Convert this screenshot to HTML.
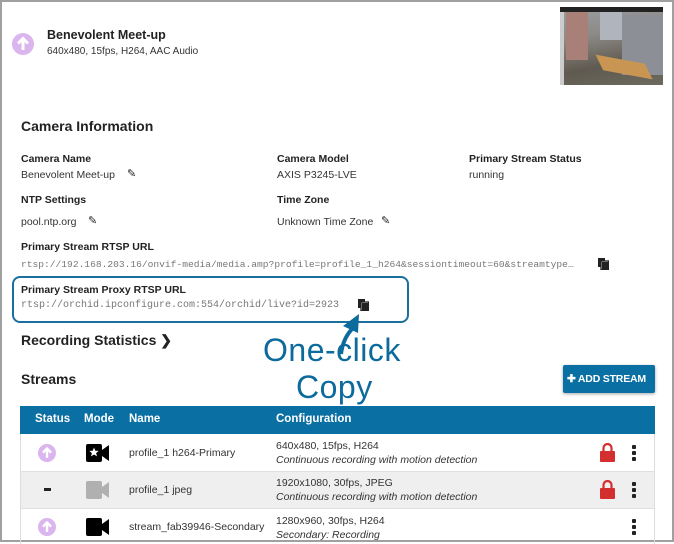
<!DOCTYPE html>
<html><head><meta charset="utf-8"><style>
*{margin:0;padding:0;box-sizing:border-box}
body{width:674px;height:544px;overflow:hidden;background:#fff;font-family:"Liberation Sans",sans-serif;color:#222;position:relative}
.frame{position:absolute;left:0;top:0;width:674px;height:542px;border:2px solid #a0a0a0}
.a{position:absolute;white-space:nowrap}
.lab{font-size:10.5px;font-weight:bold;color:#222}
.val{font-size:10.5px;color:#333}
.mono{font-family:"Liberation Mono",monospace;font-size:9.6px;color:#777}
.h{font-size:14px;font-weight:bold;color:#222}
.th{color:#fff;font-weight:bold;font-size:11.5px}
.cfg{font-size:10.5px;color:#333;line-height:14px}
.dots{position:absolute;width:4px;height:16px}
.dots b{display:block;width:4px;height:4px;background:#222;border-radius:1px;margin-bottom:2px}
</style></head><body>
<div class="frame"></div>
<svg class="a" style="left:12px;top:33px" width="22" height="22" viewBox="0 0 22 22"><circle cx="11" cy="11" r="11" fill="#dab5ee"/><path d="M11 17V6M6 10.5L11 5.5 16 10.5" stroke="#fff" stroke-width="3" fill="none"/></svg>
<div class="a" style="left:47px;top:28px;font-size:12.5px;font-weight:bold">Benevolent Meet-up</div>
<div class="a" style="left:47px;top:46px;font-size:10px;color:#333">640x480, 15fps, H264, AAC Audio</div>
<div class="a" style="left:560px;top:7px;width:103px;height:78px;background:linear-gradient(170deg,#9a9ea4 0%,#8c8a86 35%,#5f5a50 70%,#6d6a60 100%);overflow:hidden">
<div style="position:absolute;left:0;top:0;width:103px;height:5px;background:#222"></div>
<div style="position:absolute;left:6px;top:5px;width:22px;height:48px;background:#a98078"></div>
<div style="position:absolute;left:0;top:5px;width:4px;height:73px;background:#ccc"></div>
<div style="position:absolute;left:40px;top:5px;width:22px;height:28px;background:#b0b4bd"></div>
<div style="position:absolute;left:62px;top:8px;width:41px;height:60px;background:#8d8f96"></div>
<div style="position:absolute;left:42px;top:52px;width:44px;height:16px;background:#c89552;transform:skewX(35deg) rotate(12deg)"></div>
</div>
<div class="a h" style="left:21px;top:118px">Camera Information</div>
<div class="a lab" style="left:21px;top:153px">Camera Name</div>
<div class="a val" style="left:21px;top:169px">Benevolent Meet-up</div>
<div class="a" style="left:127px;top:167px;font-size:11px">✎</div>
<div class="a lab" style="left:277px;top:153px">Camera Model</div>
<div class="a val" style="left:277px;top:169px">AXIS P3245-LVE</div>
<div class="a lab" style="left:469px;top:153px">Primary Stream Status</div>
<div class="a val" style="left:469px;top:169px">running</div>
<div class="a lab" style="left:21px;top:194px">NTP Settings</div>
<div class="a val" style="left:21px;top:216px">pool.ntp.org</div>
<div class="a" style="left:88px;top:214px;font-size:11px">✎</div>
<div class="a lab" style="left:277px;top:194px">Time Zone</div>
<div class="a val" style="left:277px;top:216px">Unknown Time Zone</div>
<div class="a" style="left:381px;top:214px;font-size:11px">✎</div>
<div class="a lab" style="left:21px;top:241px">Primary Stream RTSP URL</div>
<div class="a mono" style="left:21px;top:259px;width:557px;overflow:hidden;text-overflow:ellipsis">rtsp://192.168.203.16/onvif-media/media.amp?profile=profile_1_h264&amp;sessiontimeout=60&amp;streamtype=unicast</div>
<svg class="a" style="left:598px;top:258px" width="11" height="12" viewBox="0 0 11 12"><rect x="0" y="0" width="7" height="9" fill="#222"/><rect x="3" y="3" width="7.5" height="8.5" fill="#fff" stroke="#222" stroke-width="1.3"/><rect x="4" y="4" width="6" height="7" fill="#222"/></svg>
<div class="a" style="left:12px;top:276px;width:397px;height:47px;border:2px solid #1a6f9e;border-radius:8px"></div>
<div class="a lab" style="left:21px;top:284px">Primary Stream Proxy RTSP URL</div>
<div class="a mono" style="left:21px;top:300px;font-size:10px">rtsp://orchid.ipconfigure.com:554/orchid/live?id=2923</div>
<svg class="a" style="left:358px;top:299px" width="11" height="12" viewBox="0 0 11 12"><rect x="0" y="0" width="7" height="9" fill="#222"/><rect x="3" y="3" width="7.5" height="8.5" fill="#fff" stroke="#222" stroke-width="1.3"/><rect x="4" y="4" width="6" height="7" fill="#222"/></svg>
<div class="a h" style="left:21px;top:332px">Recording Statistics ❯</div>
<svg class="a" style="left:325px;top:308px" width="45" height="50" viewBox="0 0 45 50"><path d="M16 46 Q18 30 28 20" stroke="#0d6a9c" stroke-width="4" fill="none"/><path d="M34 6 L18 18 L33 25 Z" fill="#0d6a9c"/></svg>
<div class="a" style="left:263px;top:332px;font-size:32px;color:#0d6a9c;letter-spacing:0.5px">One-click</div>
<div class="a" style="left:296px;top:369px;font-size:32px;color:#0d6a9c;letter-spacing:0.5px">Copy</div>
<div class="a h" style="left:21px;top:371px">Streams</div>
<div class="a" style="left:563px;top:365px;width:92px;height:28px;background:#0a6fa3;border-radius:2px;box-shadow:0 1px 3px rgba(0,0,0,.35);color:#fff;font-size:10.5px;font-weight:bold;line-height:28px;padding-left:4px;letter-spacing:-0.2px">✚ ADD STREAM</div>
<div class="a" style="left:20px;top:406px;width:635px;height:28px;background:#0a6fa3"></div>
<div class="a th" style="left:35px;top:413px">Status</div>
<div class="a th" style="left:84px;top:413px">Mode</div>
<div class="a th" style="left:129px;top:413px">Name</div>
<div class="a th" style="left:276px;top:413px">Configuration</div>
<div class="a" style="left:20px;top:471px;width:635px;height:38px;background:#efefef;border-top:1px solid #e0e0e0;border-bottom:1px solid #e0e0e0"></div>
<div class="a" style="left:20px;top:434px;width:635px;height:110px;border-left:1px solid #ddd;border-right:1px solid #ddd"></div>
<svg class="a" style="left:38px;top:444px" width="18" height="18" viewBox="0 0 22 22"><circle cx="11" cy="11" r="11" fill="#dab5ee"/><path d="M11 17V6M6 10.5L11 5.5 16 10.5" stroke="#fff" stroke-width="3" fill="none"/></svg>
<svg class="a" style="left:86px;top:444px" width="24" height="18" viewBox="0 0 24 18"><rect x="0" y="0" width="16" height="18" rx="2" fill="#000"/><path d="M16 6 L23 1 V17 L16 12Z" fill="#000"/><path d="M8 3.5l1.3 3.2 3.4.2-2.6 2.2.9 3.3L8 10.5l-3 1.9.9-3.3L3.3 6.9l3.4-.2z" fill="#fff"/></svg>
<div class="a val" style="left:129px;top:447px">profile_1 h264-Primary</div>
<div class="a cfg" style="left:276px;top:439px">640x480, 15fps, H264<br><i>Continuous recording with motion detection</i></div>
<svg class="a" style="left:600px;top:443px" width="15" height="19" viewBox="0 0 15 19"><path d="M3.5 8V5a4 4 0 0 1 8 0v3" stroke="#d32f2f" stroke-width="2.2" fill="none"/><rect x="0" y="8" width="15" height="11" rx="1" fill="#d32f2f"/></svg>
<div class="dots" style="left:632px;top:445px"><b></b><b></b><b></b></div>
<div class="a" style="left:44px;top:488px;width:7px;height:3px;background:#222"></div>
<svg class="a" style="left:86px;top:481px" width="24" height="18" viewBox="0 0 24 18"><rect x="0" y="0" width="16" height="18" rx="2" fill="#b0b0b0"/><path d="M16 6 L23 1 V17 L16 12Z" fill="#b0b0b0"/></svg>
<div class="a val" style="left:129px;top:484px">profile_1 jpeg</div>
<div class="a cfg" style="left:276px;top:476px">1920x1080, 30fps, JPEG<br><i>Continuous recording with motion detection</i></div>
<svg class="a" style="left:600px;top:480px" width="15" height="19" viewBox="0 0 15 19"><path d="M3.5 8V5a4 4 0 0 1 8 0v3" stroke="#d32f2f" stroke-width="2.2" fill="none"/><rect x="0" y="8" width="15" height="11" rx="1" fill="#d32f2f"/></svg>
<div class="dots" style="left:632px;top:482px"><b></b><b></b><b></b></div>
<svg class="a" style="left:38px;top:518px" width="18" height="18" viewBox="0 0 22 22"><circle cx="11" cy="11" r="11" fill="#dab5ee"/><path d="M11 17V6M6 10.5L11 5.5 16 10.5" stroke="#fff" stroke-width="3" fill="none"/></svg>
<svg class="a" style="left:86px;top:518px" width="24" height="18" viewBox="0 0 24 18"><rect x="0" y="0" width="16" height="18" rx="2" fill="#000"/><path d="M16 6 L23 1 V17 L16 12Z" fill="#000"/></svg>
<div class="a val" style="left:129px;top:521px">stream_fab39946-Secondary</div>
<div class="a cfg" style="left:276px;top:514px">1280x960, 30fps, H264<br><i>Secondary: Recording</i></div>
<div class="dots" style="left:632px;top:519px"><b></b><b></b><b></b></div>
</body></html>
